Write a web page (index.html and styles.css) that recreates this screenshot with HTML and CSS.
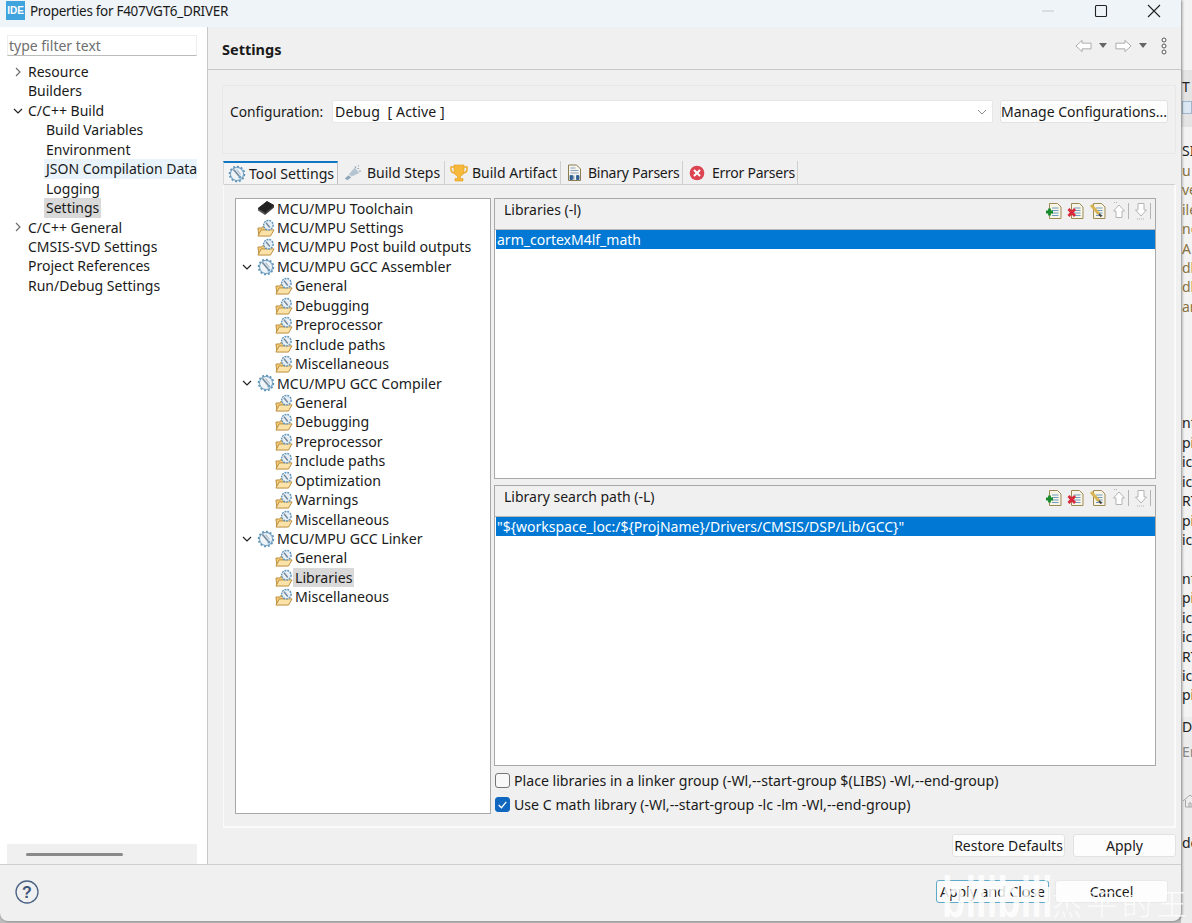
FILE: index.html
```html
<!DOCTYPE html>
<html lang="en">
<head>
<meta charset="utf-8">
<title>Properties for F407VGT6_DRIVER</title>
<link rel="stylesheet" href="styles.css">
</head>
<body>
<svg class="sprite" width="0" height="0" aria-hidden="true">
  <defs>
    <symbol id="gear" viewBox="0 0 18 18">
      <circle cx="9" cy="9" r="6.600" fill="#eef4f8" stroke="#7fa8c6" stroke-width="1.200"/>
      <circle cx="9" cy="9" r="7.500" fill="none" stroke="#5e93b8" stroke-width="1.500" stroke-dasharray="2 1.900"/>
      <path d="M5.500 4.500 11 11" stroke="#76899a" stroke-width="1.700"/>
      <path d="M8.500 4.500 12.500 9.500" stroke="#b6c8d6" stroke-width="1.300"/>
      <circle cx="11.800" cy="12" r="1.500" fill="#6f9dbf"/>
    </symbol>
    <symbol id="folder" viewBox="0 0 19 18">
      <path d="M1 9h4l1-1.500h4V17H2z" fill="#f4cc7a" stroke="#b98b3a"/>
      <path d="M1 17.500 4.500 11H18l-3.800 6.500z" fill="#fbe2a8" stroke="#b98b3a"/>
      <circle cx="12" cy="6" r="5" fill="#e6eff6" stroke="#5e93b8" stroke-width="1.500" stroke-dasharray="2 1"/>
      <path d="M9.500 3.500 13.500 8.500" stroke="#76899a" stroke-width="1.500"/>
    </symbol>
    <symbol id="chip" viewBox="0 0 18 18">
      <path d="M1 9.500 10 2.500 17 6.500 8 14z" fill="#222" stroke="#222" stroke-linejoin="round"/>
      <path d="M1 9.500 8 14 8 16 1 11.500z" fill="#555"/>
      <path d="M8 14 17 6.500V8.500L8 16z" fill="#3a3a3a"/>
    </symbol>
    <symbol id="brush" viewBox="0 0 20 18">
      <path d="M1 15 5 11.500 8 14 3.500 17z" fill="#8fa6b8"/>
      <path d="M5.500 10.500 12 3l5 6-8.500 4z" fill="#b4c4d0"/>
      <path d="M12 2.500h1.500M15 4h1.500M17 7h1.500M15.500 1h1" stroke="#7d95a8" stroke-width="1.300"/>
    </symbol>
    <symbol id="trophy" viewBox="0 0 18 18">
      <path d="M4 1h10v6.500q0 3.500-3.500 4.500v2.500H13V17H5v-2.500h2.500V12Q4 11 4 7.500z" fill="#f6b93b" stroke="#e29a1d" stroke-width=".6"/>
      <path d="M4 3H1v2.500Q1 8.500 4.500 9M14 3h3v2.500Q17 8.500 13.500 9" fill="none" stroke="#eda92c" stroke-width="1.500"/>
    </symbol>
    <symbol id="binary" viewBox="0 0 18 18">
      <path d="M2.500 1h8l4 4v11.500h-12z" fill="#f5f5ef" stroke="#8c7d50"/>
      <path d="M4.500 4h5M4.500 6.500h8M4.500 9h8" stroke="#8aa0b8"/>
      <path d="M4 11.500h2.500v4H4zM7.800 11.500v4M10.500 11.500H13v4h-2.500z" fill="#2f5f8f" stroke="#2f5f8f" stroke-width=".8"/>
    </symbol>
    <symbol id="error" viewBox="0 0 16 16">
      <circle cx="8" cy="8" r="6.500" fill="#dc4452"/>
      <path d="M5.300 5.300l5.400 5.400M10.700 5.300l-5.400 5.400" stroke="#fff" stroke-width="1.800"/>
    </symbol>
    <symbol id="doc" viewBox="0 0 18 18">
      <path d="M4.500 1.500h8l3.500 3.500v11.500H4.500z" fill="#f8f5e6" stroke="#9c8a55"/>
      <path d="M7 6h6.500M7 8.500h6.500M7 11h6.500M7 13.500h6.500" stroke="#6f9cc4"/>
    </symbol>
    <symbol id="doc-add" viewBox="0 0 18 18">
      <use href="#doc"/>
      <path d="M4.500 6.500v7M1 10h7" stroke="#178a2c" stroke-width="2.800"/>
    </symbol>
    <symbol id="doc-del" viewBox="0 0 18 18">
      <use href="#doc"/>
      <path d="M1.500 7 8 14M8 7l-6.500 7" stroke="#d9283a" stroke-width="2.800"/>
    </symbol>
    <symbol id="doc-edit" viewBox="0 0 18 18">
      <use href="#doc"/>
      <path d="M2 3l8 9" stroke="#d8b455" stroke-width="3"/>
      <path d="M10 12l2.500 2.500" stroke="#444" stroke-width="2"/>
    </symbol>
    <symbol id="up" viewBox="0 0 16 20">
      <path d="M8 4 13.500 10H11v6.500H5V10H2.500z" fill="#fff" stroke="#b4b4b4"/>
      <path d="M3 1.500h4" stroke="#b4b4b4" stroke-dasharray="1 1"/>
    </symbol>
    <symbol id="down" viewBox="0 0 16 20">
      <path d="M5 2.500h6V9h2.500L8 15 2.500 9H5z" fill="#fff" stroke="#b4b4b4"/>
      <path d="M4 18h8" stroke="#b4b4b4" stroke-dasharray="1 1"/>
    </symbol>
    <symbol id="chev-r" viewBox="0 0 10 10"><path d="M3 1l4 4-4 4" fill="none" stroke="#6e6e6e" stroke-width="1.200"/></symbol>
    <symbol id="chev-d" viewBox="0 0 10 10"><path d="M1 3l4 4 4-4" fill="none" stroke="#222" stroke-width="1.200"/></symbol>
  </defs>
</svg>

<div class="stage">
  <div class="dialog">
    <header class="titlebar">
      <span class="app-icon">IDE</span>
      <span class="title-text">Properties for F407VGT6_DRIVER</span>
      <div class="win-controls">
        <svg class="win-btn" viewBox="0 0 14 14"><path d="M1 7h12" stroke="#c4c8cc" stroke-width="1"/></svg>
        <svg class="win-btn" viewBox="0 0 14 14"><rect x="1.500" y="1.500" width="11" height="11" rx="1" fill="none" stroke="#222" stroke-width="1.100"/></svg>
        <svg class="win-btn" viewBox="0 0 14 14"><path d="M1 1l12 12M13 1L1 13" stroke="#222" stroke-width="1.100"/></svg>
      </div>
    </header>

    <div class="main">
      <aside class="sidebar">
        <div class="filter">type filter text</div>
        <ul class="nav-tree">
          <li class="row"><svg class="chev"><use href="#chev-r"/></svg><span>Resource</span></li>
          <li class="row"><span class="chev-space"></span><span>Builders</span></li>
          <li class="row"><svg class="chev"><use href="#chev-d"/></svg><span>C/C++ Build</span></li>
          <li class="row nested"><span>Build Variables</span></li>
          <li class="row nested"><span>Environment</span></li>
          <li class="row nested hover"><span>JSON Compilation Database</span></li>
          <li class="row nested"><span>Logging</span></li>
          <li class="row nested"><span class="selected-label">Settings</span></li>
          <li class="row"><svg class="chev"><use href="#chev-r"/></svg><span>C/C++ General</span></li>
          <li class="row"><span class="chev-space"></span><span>CMSIS-SVD Settings</span></li>
          <li class="row"><span class="chev-space"></span><span>Project References</span></li>
          <li class="row"><span class="chev-space"></span><span>Run/Debug Settings</span></li>
        </ul>
        <div class="hscroll"><span class="hthumb"></span></div>
      </aside>

      <section class="content">
        <div class="page-head">
          <h1 class="page-title">Settings</h1>
          <div class="page-nav">
            <svg class="nav-arrow" viewBox="0 0 18 14"><path d="M1 7 7.500 1v3H17v6H7.500v3z" fill="#fff" stroke="#a8a8a8"/></svg>
            <svg class="nav-drop" viewBox="0 0 8 5"><path d="M0 0h8L4 5z" fill="#666"/></svg>
            <svg class="nav-arrow" viewBox="0 0 18 14"><path d="M17 7 10.500 1v3H1v6h9.500v3z" fill="#fff" stroke="#a8a8a8"/></svg>
            <svg class="nav-drop" viewBox="0 0 8 5"><path d="M0 0h8L4 5z" fill="#666"/></svg>
            <svg class="nav-kebab" viewBox="0 0 8 18"><g fill="#fff" stroke="#555"><circle cx="4" cy="3" r="2"/><circle cx="4" cy="9" r="2"/><circle cx="4" cy="15" r="2"/></g></svg>
          </div>
        </div>

        <div class="page-body">
          <div class="config">
            <span class="config-label">Configuration:</span>
            <div class="combo"><span class="combo-text">Debug&nbsp; [ Active ]</span><svg class="combo-arrow" viewBox="0 0 10 6"><path d="M1 1l4 4 4-4" fill="none" stroke="#8a8a8a"/></svg></div>
            <button class="btn btn-manage">Manage Configurations...</button>
          </div>

          <div class="tabs">
            <div class="tab active"><svg class="tab-icon"><use href="#gear"/></svg><span>Tool Settings</span></div>
            <div class="tab steps"><svg class="tab-icon"><use href="#brush"/></svg><span>Build Steps</span></div>
            <div class="tab"><svg class="tab-icon"><use href="#trophy"/></svg><span>Build Artifact</span></div>
            <div class="tab"><svg class="tab-icon"><use href="#binary"/></svg><span class="tab-tight">Binary Parsers</span></div>
            <div class="tab"><svg class="tab-icon"><use href="#error"/></svg><span class="tab-tight tab-wide">Error Parsers</span></div>
          </div>

          <div class="folder">
            <ul class="tool-tree">
              <li class="trow"><span class="chev-space"></span><svg class="ticon"><use href="#chip"/></svg><span>MCU/MPU Toolchain</span></li>
              <li class="trow"><span class="chev-space"></span><svg class="ticon"><use href="#folder"/></svg><span>MCU/MPU Settings</span></li>
              <li class="trow"><span class="chev-space"></span><svg class="ticon"><use href="#folder"/></svg><span>MCU/MPU Post build outputs</span></li>
              <li class="trow"><svg class="chev"><use href="#chev-d"/></svg><svg class="ticon"><use href="#gear"/></svg><span>MCU/MPU GCC Assembler</span></li>
              <li class="trow sub"><svg class="ticon"><use href="#folder"/></svg><span>General</span></li>
              <li class="trow sub"><svg class="ticon"><use href="#folder"/></svg><span>Debugging</span></li>
              <li class="trow sub"><svg class="ticon"><use href="#folder"/></svg><span>Preprocessor</span></li>
              <li class="trow sub"><svg class="ticon"><use href="#folder"/></svg><span>Include paths</span></li>
              <li class="trow sub"><svg class="ticon"><use href="#folder"/></svg><span>Miscellaneous</span></li>
              <li class="trow"><svg class="chev"><use href="#chev-d"/></svg><svg class="ticon"><use href="#gear"/></svg><span>MCU/MPU GCC Compiler</span></li>
              <li class="trow sub"><svg class="ticon"><use href="#folder"/></svg><span>General</span></li>
              <li class="trow sub"><svg class="ticon"><use href="#folder"/></svg><span>Debugging</span></li>
              <li class="trow sub"><svg class="ticon"><use href="#folder"/></svg><span>Preprocessor</span></li>
              <li class="trow sub"><svg class="ticon"><use href="#folder"/></svg><span>Include paths</span></li>
              <li class="trow sub"><svg class="ticon"><use href="#folder"/></svg><span>Optimization</span></li>
              <li class="trow sub"><svg class="ticon"><use href="#folder"/></svg><span>Warnings</span></li>
              <li class="trow sub"><svg class="ticon"><use href="#folder"/></svg><span>Miscellaneous</span></li>
              <li class="trow"><svg class="chev"><use href="#chev-d"/></svg><svg class="ticon"><use href="#gear"/></svg><span>MCU/MPU GCC Linker</span></li>
              <li class="trow sub"><svg class="ticon"><use href="#folder"/></svg><span>General</span></li>
              <li class="trow sub"><svg class="ticon"><use href="#folder"/></svg><span class="selected-label">Libraries</span></li>
              <li class="trow sub"><svg class="ticon"><use href="#folder"/></svg><span>Miscellaneous</span></li>
            </ul>

            <div class="options">
              <div class="list-panel">
                <div class="list-head">
                  <span class="list-title">Libraries (-l)</span>
                  <div class="list-tools">
                    <svg class="tool"><use href="#doc-add"/></svg>
                    <svg class="tool"><use href="#doc-del"/></svg>
                    <svg class="tool"><use href="#doc-edit"/></svg>
                    <svg class="tool-arrow"><use href="#up"/></svg><i class="tool-sep"></i>
                    <svg class="tool-arrow"><use href="#down"/></svg><i class="tool-sep"></i>
                  </div>
                </div>
                <div class="list-body"><div class="list-item">arm_cortexM4lf_math</div></div>
              </div>
              <div class="list-panel">
                <div class="list-head">
                  <span class="list-title">Library search path (-L)</span>
                  <div class="list-tools">
                    <svg class="tool"><use href="#doc-add"/></svg>
                    <svg class="tool"><use href="#doc-del"/></svg>
                    <svg class="tool"><use href="#doc-edit"/></svg>
                    <svg class="tool-arrow"><use href="#up"/></svg><i class="tool-sep"></i>
                    <svg class="tool-arrow"><use href="#down"/></svg><i class="tool-sep"></i>
                  </div>
                </div>
                <div class="list-body"><div class="list-item">"${workspace_loc:/${ProjName}/Drivers/CMSIS/DSP/Lib/GCC}"</div></div>
              </div>
              <div class="checks">
                <div class="check-row"><span class="box"></span><span>Place libraries in a linker group (-Wl,--start-group $(LIBS) -Wl,--end-group)</span></div>
                <div class="check-row"><span class="box on"><svg viewBox="0 0 12 12"><path d="M2.500 6.500 5 9l4.500-5.500" fill="none" stroke="#fff" stroke-width="1.200"/></svg></span><span>Use C math library (-Wl,--start-group -lc -lm -Wl,--end-group)</span></div>
              </div>
            </div>
          </div>

          <div class="page-actions">
            <button class="btn btn-restore">Restore Defaults</button>
            <button class="btn btn-apply">Apply</button>
          </div>
        </div>
      </section>
    </div>

    <footer class="footer">
      <svg class="help" viewBox="0 0 24 24"><circle cx="12" cy="12" r="11" fill="none" stroke="#4a6285" stroke-width="1.300"/><text x="12" y="18" text-anchor="middle" class="help-mark">?</text></svg>
      <div class="footer-actions">
        <button class="btn btn-main">Apply and Close</button>
        <button class="btn btn-main btn-cancel">Cancel</button>
      </div>
    </footer>
  </div>

  <div class="behind">
    <div class="bg-row"></div><div class="bg-row"></div><div class="bg-row"></div>
    <div class="bg-band"><div class="bg-row dark">T</div><div class="bg-row"><i class="bg-box"></i></div></div>
    <div class="bg-spacer"></div>
    <div class="bg-row dark">SI</div>
    <div class="bg-row brown">u</div>
    <div class="bg-row brown">ve</div>
    <div class="bg-row brown">ile</div>
    <div class="bg-row brown">nc</div>
    <div class="bg-row brown">A</div>
    <div class="bg-row brown">dl</div>
    <div class="bg-row brown">dl</div>
    <div class="bg-row brown">ar</div>
    <div class="bg-gap"></div>
    <div class="bg-row dark">nf</div>
    <div class="bg-row dark">pic</div>
    <div class="bg-row dark">ic</div>
    <div class="bg-row dark">ic</div>
    <div class="bg-row dark">RT</div>
    <div class="bg-row dark">pic</div>
    <div class="bg-row dark">ic</div>
    <div class="bg-row"></div>
    <div class="bg-row dark">nf</div>
    <div class="bg-row dark">pic</div>
    <div class="bg-row dark">ic</div>
    <div class="bg-row dark">ic</div>
    <div class="bg-row dark">RT</div>
    <div class="bg-row dark">ic</div>
    <div class="bg-row dark">pic</div>
    <div class="bg-low">
      <div class="bg-row dark">D</div>
      <div class="bg-row muted">En</div>
      <svg class="bg-home" viewBox="0 0 16 16"><path d="M1 8 8 2l7 6M3.500 7v7h9V7M7 14v-4h2v4" fill="none" stroke="#a8a8a8"/></svg>
      <div class="bg-row dark">de</div>
    </div>
  </div>

  <div class="watermark">
    <span class="wm-logo">bilibili</span>
    <span class="wm-text">杰平的王</span>
  </div>
</div>
</body>
</html>
```

FILE: styles.css
```css
* { box-sizing: border-box; }
html, body { margin: 0; padding: 0; }
body {
  width: 1192px;
  height: 923px;
  overflow: hidden;
  font-family: "Noto Sans", "Open Sans", "Liberation Sans", sans-serif;
  font-size: 14.150px;
  color: #1a1a1a;
  background: #bdbdbd;
}
ul { list-style: none; margin: 0; padding: 0; }
h1 { margin: 0; }
.sprite { position: absolute; }

.stage { position: relative; display: flex; width: 1192px; height: 923px; overflow: hidden; }

.dialog {
  width: 1181px;
  height: 921px;
  flex: none;
  display: flex;
  flex-direction: column;
  background: #f0f0f0;
  border-radius: 0 0 8px 8px;
  overflow: hidden;
  box-shadow: 1px 0 3px rgba(0,0,0,.45);
  position: relative;
  z-index: 1;
}

/* title bar */
.titlebar { height: 27px; flex: none; display: flex; align-items: center; background: #eff4f9; padding: 0 0 6px 6px; }
.app-icon {
  width: 19px; height: 19px; background: #3fa4de; color: #fff;
  font: bold 10px "Liberation Sans", sans-serif;
  display: flex; align-items: center; justify-content: center;
  margin-right: 5px;
}
.title-text { font-size: 13.500px; letter-spacing: -.3px; }
.win-controls { margin-left: auto; display: flex; gap: 39px; padding-right: 20px; align-items: center; }
.win-btn { width: 14px; height: 14px; }

.main { flex: 1; display: flex; min-height: 0; }

/* sidebar */
.sidebar {
  width: 208px; flex: none;
  background: #fff;
  border-right: 1px solid #c8c8c8;
  display: flex; flex-direction: column;
  padding: 8px 10px 0 7px;
  font-size: 14px;
}
.filter {
  height: 21px; flex: none;
  border-bottom: 1px solid #bcbcbc;
  border-left: 1px solid #eee;
  border-right: 1px solid #eee;
  border-top: 1px solid #eee;
  color: #6f6f6f; font-size: 14px; line-height: 19px; padding-left: 1px;
}
.nav-tree { flex: 1; padding-top: 6px; min-height: 0; overflow: hidden; }
.row { height: 19.440px; display: flex; align-items: center; white-space: nowrap; overflow: hidden; padding-left: 6px; line-height: 19.440px; }
.chev { width: 10px; height: 10px; flex: none; margin-right: 5px; }
.chev-space { width: 10px; height: 10px; flex: none; margin-right: 5px; }
.row.nested { padding-left: 39px; }
.row.hover { background: linear-gradient(90deg, #fff 37px, #e9f3fb 37px); }
.selected-label { background: #d9d9d9; padding: 0 2px; margin-left: -2px; }
.hscroll { height: 20px; flex: none; background: #f0f0f0; display: flex; align-items: center; padding: 0 0 0 19px; }
.hthumb { width: 97px; height: 3px; border-radius: 2px; background: #8a8a8a; }

/* content */
.content { flex: 1; min-width: 0; display: flex; flex-direction: column; }
.page-head {
  height: 43px; flex: none; display: flex; align-items: center;
  border-bottom: 1px solid #c8c8c8; padding: 1px 13px 0 14px;
}
.page-title { font-size: 14.500px; font-weight: 700; }
.page-nav { margin-left: auto; display: flex; align-items: center; padding-bottom: 6px; }
.nav-arrow { width: 17px; height: 14px; }
.nav-drop { width: 8px; height: 5px; margin: 0 8px 0 7px; }
.nav-kebab { width: 8px; height: 18px; margin-left: 5px; }

.page-body { flex: 1; display: flex; flex-direction: column; padding: 15px 5px 0 14px; min-height: 0; }
.config {
  height: 69px; flex: none;
  border: 1px solid #e8e8e8;
  display: flex; align-items: flex-start; padding: 14px 6px 0 7px;
}
.config-label { width: 102px; flex: none; line-height: 23px; font-size: 13.800px; }
.combo {
  width: 661px; height: 23px; flex: none; background: #fff; border: 1px solid #e6e6e6; border-radius: 2px;
  display: flex; align-items: center; justify-content: space-between; padding: 0 5px 0 2px; line-height: 21px;
}
.combo-text { letter-spacing: .1px; }
.combo-arrow { width: 10px; height: 6px; }
.btn {
  font: inherit; color: inherit; background: #fdfdfd;
  border: 1px solid #e2e2e2; border-radius: 3px; padding: 0; height: 23px; white-space: nowrap;
}
.btn-manage { width: 168px; margin-left: 7px; font-size: 14px; }

.tabs {
  display: grid; grid-template-columns: 115px 107px 116px 122px 115px;
  margin: 7px 0 0 1px; height: 23px; flex: none;
}
.tab {
  display: flex; align-items: center; gap: 4px; padding-left: 5px;
  border-right: 1px solid #cfcfcf; white-space: nowrap; line-height: 20px; font-size: 14px;
}
.tab.active { background: #f4f4f4; border-top: 2px solid #0f76c4; border-left: 1px solid #d8d8d8; border-right: 1px solid #c0c0c0; padding-left: 4px; gap: 3px; font-size: 14.150px; }
.tab.steps { padding-left: 6px; gap: 5px; }
.tab-icon { width: 18px; height: 18px; flex: none; }
.tab-tight { font-size: 14px; letter-spacing: -.25px; }
.tab-wide { margin-left: 2px; }

.folder {
  height: 644px; flex: none;
  margin-left: 1px;
  border-top: 1px solid #cfcfcf;
  border-left: 1px solid #fafafa;
  border-right: 2px solid #fafafa;
  border-bottom: 2px solid #fafafa;
  display: flex; gap: 3px;
  padding: 13px 18px 12px 11px;
}
.tool-tree {
  width: 256px; flex: none; background: #fff; border: 1px solid #a8a8a8;
  overflow: hidden;
}
.trow { height: 19.440px; display: flex; align-items: center; white-space: nowrap; padding-left: 6px; line-height: 19.440px; position: relative; top: -.4px; }
.trow.sub { padding-left: 39px; }
.ticon { width: 18px; height: 18px; flex: none; margin-right: 2px; }

.options { flex: 1; min-width: 0; display: flex; flex-direction: column; gap: 6px; }
.list-panel { height: 281px; flex: none; border: 1px solid #a8a8a8; display: flex; flex-direction: column; background: #fff; }
.list-head {
  height: 31px; flex: none; background: #f0f0f0; border-bottom: 1px solid #b8b8b8;
  display: flex; align-items: center; padding: 0 0 6px 9px;
}
.list-title { margin-bottom: 4px; font-size: 14px; }
.list-tools { margin-left: auto; display: flex; align-items: center; }
.tool { width: 18px; height: 18px; margin-right: 4px; }
.tool-arrow { width: 16px; height: 20px; }
.tool-sep { width: 1px; height: 16px; background: #b4b4b4; margin: 0 4px 0 1px; }
.list-body { flex: 1; padding: 0 0 0 1px; }
.list-item { height: 19px; background: #0078d4; color: #fff; line-height: 19px; padding-left: 1px; white-space: nowrap; font-size: 14px; }

.checks { display: flex; flex-direction: column; margin-top: -4px; }
.check-row { height: 24px; display: flex; align-items: center; gap: 4px; white-space: nowrap; padding-left: 1px; }
.box { width: 15px; height: 15px; border: 1px solid #767676; border-radius: 3px; background: #f8f8f8; flex: none; display: flex; }
.box.on { background: #0f67c0; border-color: #0f67c0; }
.box svg { width: 13px; height: 13px; }

.page-actions { display: flex; justify-content: flex-end; gap: 8px; margin-top: 6px; }
.btn-restore { width: 113px; font-size: 14px; }
.btn-apply { width: 103px; font-size: 14px; }

/* footer */
.footer {
  height: 57px; flex: none; border-top: 1px solid #cfcfcf;
  display: flex; align-items: center; justify-content: space-between;
  padding: 0 13px 3px 15px;
}
.help { width: 24px; height: 24px; }
.help-mark { font: bold 16px "Liberation Sans", sans-serif; fill: #3d5478; }
.footer-actions { display: flex; gap: 6px; }
.btn-main { width: 113px; border-color: #e8e8e8; font-size: 14px; }
.footer-actions .btn-main:first-child { border-color: #5fa9c9; background: #fbfbfb; }

/* window behind the dialog */
.behind {
  flex: 1; min-width: 0; background: #f3f3f3; position: relative;
  display: flex; flex-direction: column; overflow: hidden; padding-top: 11.700px;
  padding-left: 1px;
  font-size: 14px; white-space: nowrap;
}
.bg-row { height: 19.440px; line-height: 19px; flex: none; }
.bg-band { background: #e4e4e4; margin-left: -1px; padding: 7px 0 6px 1px; flex: none; }
.bg-band + .bg-spacer { height: 14.500px; flex: none; }
.bg-box { display: block; width: 10px; height: 13px; background: #dbe7f3; border: 1px solid #9fb6cc; margin-top: 5px; }
.dark { color: #222; }
.brown { color: #8a7340; }
.muted { color: #8a8a8a; }
.bg-gap { height: 97px; flex: none; }
.bg-low { margin-top: 12px; background: #ececec; margin-left: -1px; padding-left: 1px; flex: 1; display: flex; flex-direction: column; gap: 6px; }
.bg-home { width: 16px; height: 16px; flex: none; margin: 25px 0 18px 0; }

/* video watermark over the screenshot */
.watermark { position: absolute; left: 0; right: 0; bottom: 0; height: 50px; z-index: 2; pointer-events: none; }
.wm-logo {
  position: absolute; left: 942px; bottom: 0;
  font: bold 58px/52px "Liberation Sans", sans-serif; color: rgba(255,255,255,.85);
  transform: scaleX(.66); transform-origin: left bottom;
}
.wm-text {
  position: absolute; left: 1052px; bottom: 2px;
  font: 300 30px/38px "Noto Sans CJK SC", sans-serif; color: rgba(255,255,255,.78); letter-spacing: 5px;
  white-space: nowrap;
}
```
